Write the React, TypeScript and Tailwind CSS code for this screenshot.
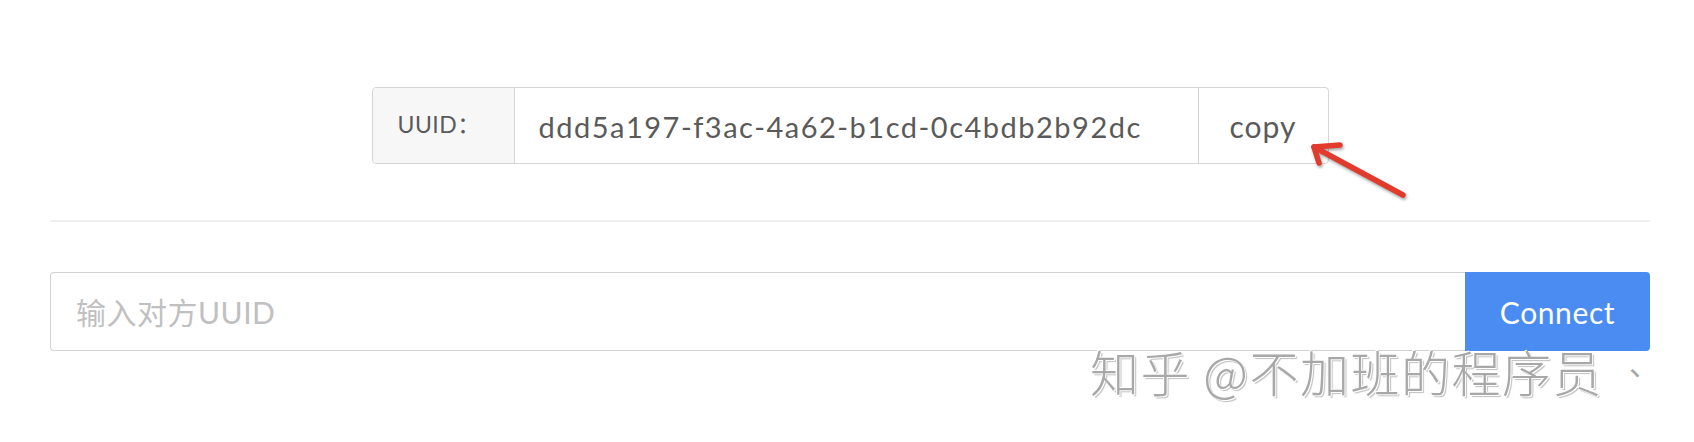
import { useState } from "react";

const uuid = "ddd5a197-f3ac-4a62-b1cd-0c4bdb2b92dc";

export default function App() {
  const [peer, setPeer] = useState("");

  return (
    <div className="relative h-[442px] w-full overflow-hidden bg-white font-['Lato','Noto_Sans_CJK_SC',sans-serif] text-[#5a5a5a]">
      <div className="ml-[50px] w-[1600px] pt-[87px]">
        {/* uuid group */}
        <div className="mx-auto flex h-[77px] w-[957px] rounded-[4px] border border-[#d6d6d6]">
          <div className="flex w-[142px] items-center rounded-l-[4px] border-r border-[#d6d6d6] bg-[#f7f7f7] pb-[2px] pl-[25px] text-[23px] leading-none tracking-[0.5px]">
            UUID：
          </div>
          <div className="flex w-[684px] items-center border-r border-[#d6d6d6] pl-[24px] pt-[2px] text-[29px] leading-none tracking-[1.5px]">
            {uuid}
          </div>
          <button
            className="flex flex-1 items-center justify-center pt-[1px] text-[30px] leading-none tracking-[1px] text-[#5a5a5a]"
            onClick={() => navigator.clipboard?.writeText(uuid)}
          >
            copy
          </button>
        </div>

        <div className="mt-[56px] h-[2px] w-full bg-[#f0f0f0]" />

        {/* connect row */}
        <div className="mt-[50px] flex h-[79px] w-full">
          <input
            value={peer}
            onChange={(e) => setPeer(e.target.value)}
            placeholder="输入对方UUID"
            className="h-full flex-1 rounded-l-[4px] border border-r-0 border-[#d2d2d2] pl-[25px] text-[30px] tracking-[0.5px] outline-none placeholder:text-[#c0c0c0]"
          />
          <button className="h-full w-[185px] rounded-r-[4px] bg-[#4a8cf2] text-[30px] leading-none tracking-[0.6px] text-white">
            Connect
          </button>
        </div>
      </div>

      {/* red arrow annotation */}
      <svg
        className="absolute left-[1300px] top-[132px]"
        width="115"
        height="75"
        viewBox="0 0 115 75"
      >
        <g
          stroke="#e23b2e"
          strokeWidth="5.5"
          strokeLinecap="round"
          strokeLinejoin="round"
          fill="none"
          style={{ filter: "drop-shadow(1px 2px 1.5px rgba(0,0,0,0.35))" }}
        >
          <path d="M103 63 L14 15" />
          <path d="M40 13 L14 15 L19 31" />
        </g>
      </svg>

      {/* watermark */}
      <div className="absolute left-[1090px] top-[346px] whitespace-nowrap font-['Noto_Sans_CJK_SC',sans-serif] text-[49px] font-light leading-none tracking-[1.5px] text-[#a8a8a8] [text-shadow:1px_1px_0_#fff,-1px_-1px_0_#fff,2px_2px_1px_rgba(0,0,0,0.25)]">
        知乎 @不加班的程序员
      </div>
      <div className="absolute left-[1629px] top-[347px] font-['Noto_Sans_CJK_SC',sans-serif] text-[30px] leading-none text-[#a8a8a8]">
        、
      </div>
    </div>
  );
}
